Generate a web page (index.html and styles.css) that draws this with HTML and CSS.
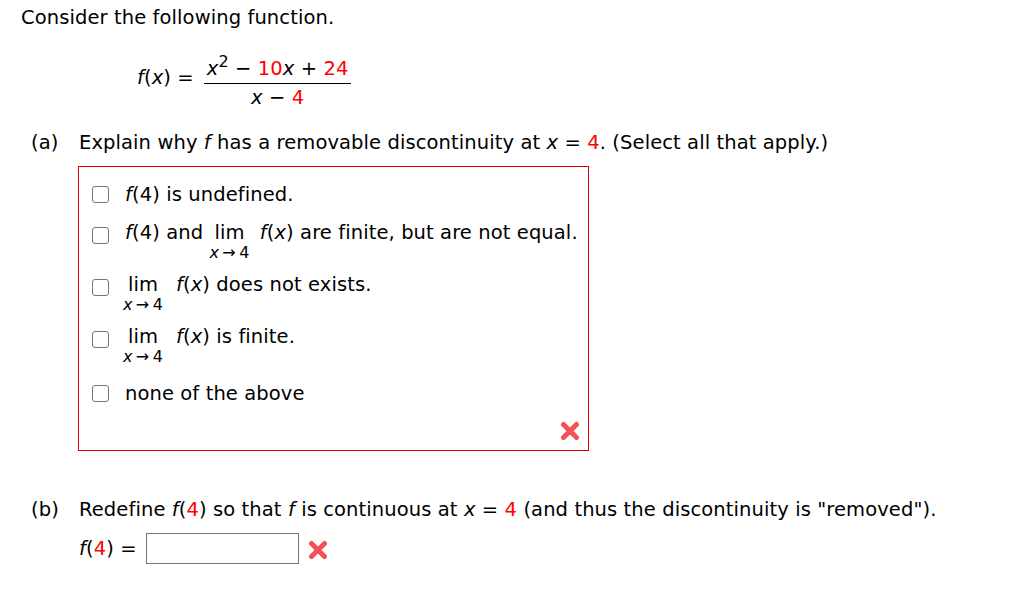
FILE: index.html
```html
<!DOCTYPE html>
<html>
<head>
<meta charset="utf-8">
<link rel="stylesheet" href="styles.css">
</head>
<body>
<div class="page">
  <p class="intro">Consider the following function.</p>

  <div class="formula">
    <span class="lhs"><i>f</i>(<i>x</i>) =</span>
    <span class="frac">
      <span class="num"><i>x</i><sup>2</sup> &minus; <span class="red">10</span><i>x</i> + <span class="red">24</span></span>
      <span class="den"><i>x</i> &minus; <span class="red">4</span></span>
    </span>
  </div>

  <div class="part part-a">
    <span class="plabel">(a)</span>
    <span class="ptext">Explain why <i>f</i> has a removable discontinuity at <i>x</i> = <span class="red">4</span>. (Select all that apply.)</span>
  </div>

  <div class="choices">
    <div class="choice c1">
      <span class="box"></span>
      <span class="ctext"><i>f</i>(4) is undefined.</span>
    </div>
    <div class="choice c2">
      <span class="box"></span>
      <span class="ctext"><i>f</i>(4) and <span class="lim"><span class="limw">lim</span><span class="limsub"><i>x</i>&thinsp;&rarr;&thinsp;4</span></span> <i>f</i>(<i>x</i>) are finite, but are not equal.</span>
    </div>
    <div class="choice c3">
      <span class="box"></span>
      <span class="ctext"><span class="lim lead"><span class="limw">lim</span><span class="limsub"><i>x</i>&thinsp;&rarr;&thinsp;4</span></span><i>f</i>(<i>x</i>) does not exists.</span>
    </div>
    <div class="choice c4">
      <span class="box"></span>
      <span class="ctext"><span class="lim lead"><span class="limw">lim</span><span class="limsub"><i>x</i>&thinsp;&rarr;&thinsp;4</span></span><i>f</i>(<i>x</i>) is finite.</span>
    </div>
    <div class="choice c5">
      <span class="box"></span>
      <span class="ctext">none of the above</span>
    </div>
    <div class="mark-row">
      <svg class="xmark" width="20" height="20" viewBox="0 0 20 20"><path d="M3.5 3.5 L16.5 16.5 M16.5 3.5 L3.5 16.5" stroke="#f4505a" stroke-width="5" stroke-linecap="round"/></svg>
    </div>
  </div>

  <div class="part part-b">
    <span class="plabel">(b)</span>
    <span class="ptext">Redefine <i>f</i>(<span class="red">4</span>) so that <i>f</i> is continuous at <i>x</i> = <span class="red">4</span> (and thus the discontinuity is "removed").</span>
  </div>
  <div class="answer">
    <span class="alabel"><i>f</i>(<span class="red">4</span>) =</span>
    <span class="input"></span>
    <svg class="xmark" width="20" height="20" viewBox="0 0 20 20"><path d="M3.5 3.5 L16.5 16.5 M16.5 3.5 L3.5 16.5" stroke="#f4505a" stroke-width="5" stroke-linecap="round"/></svg>
  </div>
</div>
</body>
</html>
```

FILE: styles.css
```css
html, body {
  margin: 0;
  padding: 0;
  background: #fff;
}
body {
  font-family: "DejaVu Sans", Verdana, sans-serif;
  font-size: 19.5px;
  letter-spacing: 0.1px;
  color: #000;
}
.page {
  padding: 6px 0 0 21px;
}
i { font-style: italic; }
.red { color: #ff0000; }
.intro {
  margin: 0;
  line-height: 24px;
}
.formula {
  display: flex;
  align-items: center;
  margin: 27px 0 0 116px;
}
.lhs {
  margin-right: 10px;
  margin-bottom: 12px;
  line-height: 24px;
}
.frac {
  display: inline-flex;
  flex-direction: column;
  align-items: center;
}
.num {
  padding: 0 3px 2px;
  border-bottom: 1px solid #000;
  line-height: 24px;
}
.num sup {
  font-size: 16px;
  line-height: 0;
  vertical-align: 8px;
}
.den {
  line-height: 24px;
  padding-top: 2px;
}
.part {
  display: flex;
}
.part-a { margin-top: 21px; }
.plabel {
  margin-left: 10px;
  width: 48px;
  flex: none;
  line-height: 24px;
}
.ptext { line-height: 24px; }
.choices {
  margin: 11px 0 0 57px;
  width: 509px;
  height: 283px;
  border: 1px solid #e00000;
  display: flex;
  flex-direction: column;
}
.choice {
  display: flex;
  align-items: flex-start;
  padding-left: 13px;
}
.box {
  width: 15px;
  height: 15px;
  border: 1px solid #767676;
  border-radius: 3px;
  flex: none;
  margin-top: 3px;
  margin-right: 16px;
  background: #fff;
}
.ctext { line-height: 24px; }
.c1 { margin-top: 16px; }
.c2 { margin-top: 14px; }
.c2 .box { margin-top: 6px; }
.c3 { margin-top: 12px; }
.c4 { margin-top: 12px; }
.c5 { margin-top: 17px; }
.c3 .box, .c4 .box { margin-top: 6px; }
.lim {
  display: inline-flex;
  flex-direction: column;
  align-items: center;
  vertical-align: top;
  margin: 0 4px 0 0;
}
.limw { line-height: 24px; }
.limsub {
  font-size: 16px;
  line-height: 16px;
  white-space: nowrap;
}
.lead { margin-right: 13px; margin-left: -2px; }
.mark-row {
  margin-top: auto;
  display: flex;
  justify-content: flex-end;
  padding: 0 8px 9px 0;
}
.part-b { margin-top: 47px; }
.answer {
  display: flex;
  align-items: center;
  margin: 11px 0 0 58px;
}
.alabel { margin-right: 9px; line-height: 24px; }
.input {
  width: 151px;
  height: 29px;
  border: 1px solid #767676;
  margin-right: 9px;
}
.answer .xmark { margin-top: 3px; }
```
